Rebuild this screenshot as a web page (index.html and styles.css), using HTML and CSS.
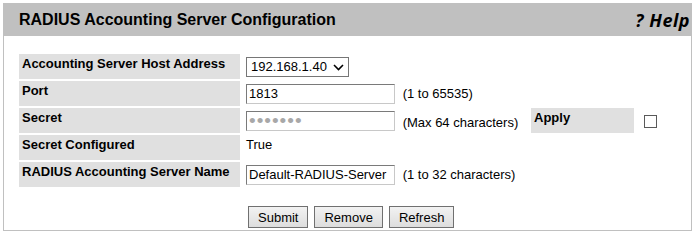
FILE: index.html
```html
<!DOCTYPE html>
<html lang="en">
<head>
  <meta charset="UTF-8">
  <title>RADIUS Accounting Server Configuration</title>
  <link rel="stylesheet" href="styles.css">
</head>
<body>

  <div class="panel">
    <div class="panel-head">
      <span class="title">RADIUS Accounting Server Configuration</span>
      <span class="help">? Help</span>
    </div>

    <form class="panel-body">
      <table class="cfg">
        <tr>
          <td class="lbl">Accounting Server Host Address</td>
          <td class="val" colspan="3">
            <span class="sel-wrap">
              <select class="sel"><option>192.168.1.40</option></select>
              <svg class="chev" width="11" height="7" viewBox="0 0 11 7"><path d="M1 1 L5.5 5.5 L10 1" fill="none" stroke="#000" stroke-width="1.6"/></svg>
            </span>
          </td>
        </tr>
        <tr>
          <td class="lbl">Port</td>
          <td class="val" colspan="3"><input class="txt" type="text" value="1813"> <span class="note">(1 to 65535)</span></td>
        </tr>
        <tr>
          <td class="lbl">Secret</td>
          <td class="val"><input class="txt pw" type="password" value="secret1"> <span class="note">(Max 64 characters)</span></td>
          <td class="lbl apply">Apply</td>
          <td class="chk"><input type="checkbox"></td>
        </tr>
        <tr>
          <td class="lbl">Secret Configured</td>
          <td class="val plain" colspan="3">True</td>
        </tr>
        <tr>
          <td class="lbl">RADIUS Accounting Server Name</td>
          <td class="val" colspan="3"><input class="txt" type="text" value="Default-RADIUS-Server"> <span class="note">(1 to 32 characters)</span></td>
        </tr>
      </table>

      <div class="actions">
        <button type="button" class="btn">Submit</button>
        <button type="button" class="btn">Remove</button>
        <button type="button" class="btn">Refresh</button>
      </div>
    </form>
  </div>

</body>
</html>
```

FILE: styles.css
```css
body {
  margin: 0;
  font-family: "Liberation Sans", Arial, sans-serif;
  font-size: 13px;
  color: #000;
  background: #fff;
}

.panel {
  margin: 3px 0 0 3px;
  width: 687px;
  border: 1px solid #c0c0c0;
}

.panel-head {
  display: flex;
  justify-content: space-between;
  align-items: center;
  height: 32px;
  padding: 0 1px 0 15px;
  background: #c0c0c0;
}

.title {
  font-size: 16px;
  font-weight: bold;
}

.help {
  font-family: "Open Sans", sans-serif;
  font-size: 18px;
  font-weight: bold;
  font-style: italic;
  letter-spacing: 0.5px;
}

.panel-body {
  padding: 16px 0 2px 13px;
  margin: 0;
}

.cfg {
  border-spacing: 2px;
}

.cfg tr {
  height: 25px;
}

.cfg td {
  padding: 0;
}

.lbl {
  width: 218px;
  padding: 2px 0 0 3px !important;
  background: #e0e0e0;
  font-weight: bold;
  vertical-align: top;
  white-space: nowrap;
}

.apply {
  width: 100px;
}

.val {
  width: 283px;
  padding-left: 4px !important;
  vertical-align: middle;
  white-space: nowrap;
}

.plain {
  vertical-align: top;
  padding-top: 2px !important;
}

.chk {
  width: 40px;
  padding-left: 4px !important;
  vertical-align: middle;
}

.chk input {
  appearance: none;
  box-sizing: border-box;
  margin: 0 0 0 4px;
  width: 13px;
  height: 13px;
  border: 1px solid #5a5a5a;
  border-radius: 0;
  background: #fff;
  vertical-align: middle;
}

.sel-wrap {
  position: relative;
  display: inline-block;
}

.sel {
  appearance: none;
  width: 103px;
  height: 20px;
  margin: 0;
  padding: 0 0 0 4px;
  border: 1px solid #767676;
  border-radius: 0;
  background: #fff;
  font-family: inherit;
  font-size: 13px;
  color: #000;
}

.chev {
  position: absolute;
  right: 5px;
  top: 7px;
  pointer-events: none;
}

.txt {
  box-sizing: border-box;
  width: 149px;
  height: 20px;
  margin: 0;
  padding: 1px 2px;
  border: 1px solid;
  border-color: #7a7a7a #c8c8c8 #c8c8c8 #7a7a7a;
  font-family: inherit;
  font-size: 13px;
  color: #000;
}

.pw {
  color: #a8a8a8;
  letter-spacing: 1px;
  font-size: 19px;
  padding: 0 2px;
}

.note {
  margin-left: 4px;
}

.actions {
  margin: 17px 0 0 231px;
  display: flex;
  gap: 6px;
}

.btn {
  height: 22px;
  padding: 0 9px;
  border: 1px solid #707070;
  border-radius: 0;
  background: linear-gradient(#f2f2f2, #dddddd);
  font-family: inherit;
  font-size: 13px;
  color: #000;
}
```
